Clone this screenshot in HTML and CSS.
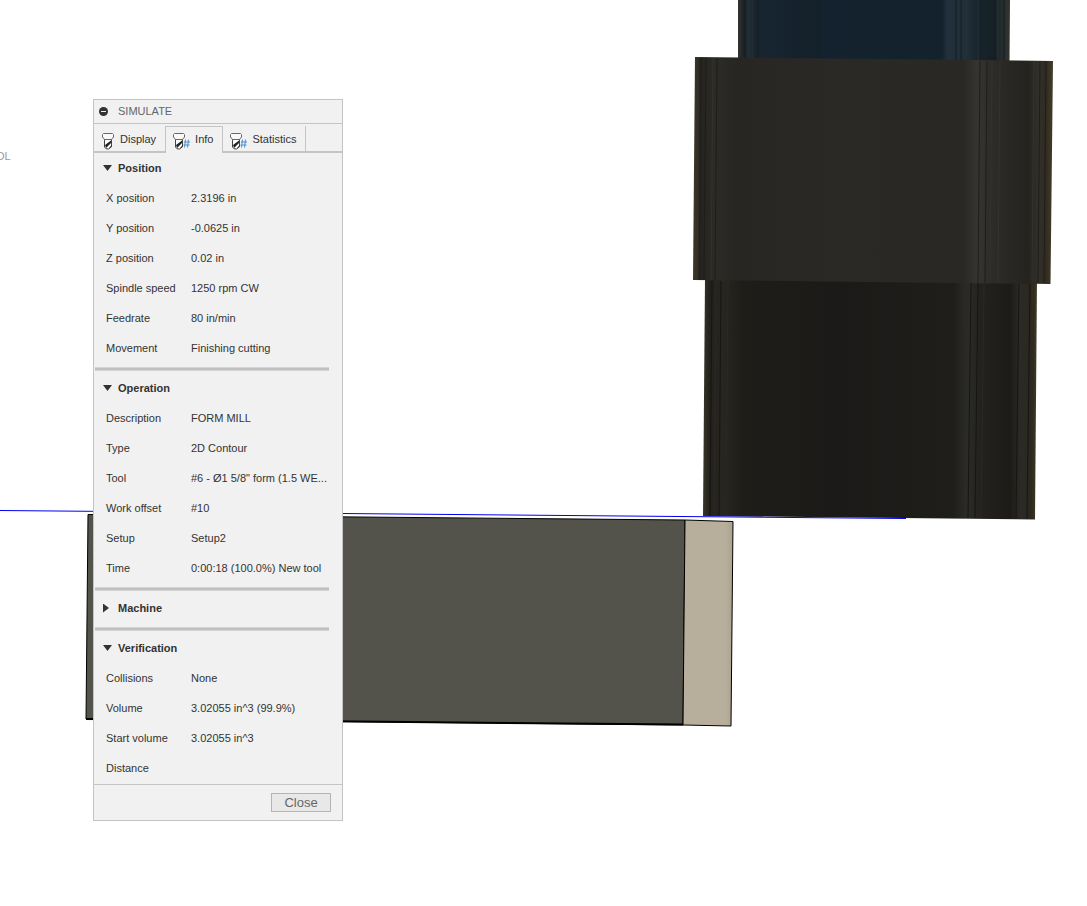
FILE: index.html
```html
<!DOCTYPE html>
<html lang="en">
<head>
    <meta charset="UTF-8">
    <meta name="viewport" content="width=device-width, initial-scale=1.0">
    <title>Simulate</title>
    <link rel="stylesheet" href="styles.css">
</head>
<body>
    <main class="viewport">
        <!-- 3D view: tool holder, stock and toolpath -->
        <svg class="scene" width="1087" height="906" viewBox="0 0 1087 906" aria-hidden="true">
            <defs>
                <linearGradient id="shank">
                    <stop offset="0" stop-color="#33352e"/>
                    <stop offset="0.02" stop-color="#1b2327"/>
                    <stop offset="0.04" stop-color="#222c33"/>
                    <stop offset="0.06" stop-color="#19242c"/>
                    <stop offset="0.1" stop-color="#172530"/>
                    <stop offset="0.3" stop-color="#14202a"/>
                    <stop offset="0.31" stop-color="#13222e"/>
                    <stop offset="0.75" stop-color="#14222d"/>
                    <stop offset="0.77" stop-color="#22303b"/>
                    <stop offset="0.84" stop-color="#202e38"/>
                    <stop offset="0.89" stop-color="#17232b"/>
                    <stop offset="0.94" stop-color="#162026"/>
                    <stop offset="0.97" stop-color="#252c2e"/>
                    <stop offset="1" stop-color="#34342b"/>
                </linearGradient>
                <linearGradient id="collar">
                    <stop offset="0" stop-color="#3d3728"/>
                    <stop offset="0.015" stop-color="#302d24"/>
                    <stop offset="0.02" stop-color="#24231f"/>
                    <stop offset="0.06" stop-color="#2c2b26"/>
                    <stop offset="0.12" stop-color="#272623"/>
                    <stop offset="0.4" stop-color="#2a2926"/>
                    <stop offset="0.75" stop-color="#292824"/>
                    <stop offset="0.79" stop-color="#353432"/>
                    <stop offset="0.83" stop-color="#2d2c28"/>
                    <stop offset="0.93" stop-color="#24231f"/>
                    <stop offset="0.96" stop-color="#32302a"/>
                    <stop offset="0.98" stop-color="#302b21"/>
                    <stop offset="1" stop-color="#453c29"/>
                </linearGradient>
                <linearGradient id="cutter">
                    <stop offset="0" stop-color="#38352a"/>
                    <stop offset="0.02" stop-color="#22211b"/>
                    <stop offset="0.06" stop-color="#272620"/>
                    <stop offset="0.12" stop-color="#1e1d19"/>
                    <stop offset="0.4" stop-color="#1b1a18"/>
                    <stop offset="0.75" stop-color="#1f1e1b"/>
                    <stop offset="0.79" stop-color="#2b2b29"/>
                    <stop offset="0.83" stop-color="#23221e"/>
                    <stop offset="0.92" stop-color="#1c1b17"/>
                    <stop offset="0.95" stop-color="#2c2b28"/>
                    <stop offset="0.98" stop-color="#2b271e"/>
                    <stop offset="1" stop-color="#403824"/>
                </linearGradient>
                <linearGradient id="stock-end">
                    <stop offset="0" stop-color="#b7af9c"/>
                    <stop offset="0.85" stop-color="#b7af9c"/>
                    <stop offset="1" stop-color="#aaa28d"/>
                </linearGradient>
            </defs>

            <text class="axis-label" x="-4" y="160">OL</text>

            <!-- tool -->
            <path fill="url(#cutter)" d="M705 278H1037L1035 519.500L703 516Z"/>
            <path fill="url(#shank)" d="M738 0H1010L1009.500 62H738Z"/>
            <path fill="url(#collar)" d="M695 57L1053 61L1050.500 284L693 280Z"/>
            <g fill="none" stroke-width="1">
                <path stroke="#141c20" d="M745 0V58M758 0V58M956 0V60M961 0V60M995 0V60M1004 0V60"/>
                <path stroke="#25323a" d="M749 0V58M753 0V58M966 0V60M978 0V60M998 0V60"/>
                <path stroke="#1f1e1a" d="M701 58L699 280M706 58L704 280M717 58L715 280M980 61L978 283M987 61L985 283M1040 61L1038 283M1046 61L1044 283"/>
                <path stroke="#34332e" d="M713 58L711 280M975 61L973 283M984 61L982 283M992 61L990 283M1000 61L998 283M1034 61L1032 283"/>
                <path stroke="#171613" d="M712 281L710 516M721 281L719 516M971 283L968 518M978 283L975 518M1019 284L1016 519M1030 284L1027 519"/>
                <path stroke="#2c2a25" d="M716 281L714 516M728 281L726 516M967 283L964 518M984 283L981 518M1023 284L1020 519M1034 284L1031 519"/>
            </g>

            <!-- stock -->
            <path fill="#53524b" stroke="#000" d="M88 514.500L685 520L683 725L86 719Z"/>
            <path fill="url(#stock-end)" stroke="#000" d="M685 520L733 521.500L731 726L683 725Z"/>
            <path stroke="#000" stroke-width="2" d="M86 719L683 724.500"/>
            <path stroke="#0000f0" d="M0 510.500L906 518.500"/>
        </svg>

        <section class="panel" aria-label="Simulate">
            <header class="panel-header">
                <button class="collapse" type="button" aria-label="Collapse">
                    <svg width="9" height="9" viewBox="0 0 9 9"><circle cx="4.500" cy="4.500" r="4.500" fill="#333"/><path d="M2 4.500H7" stroke="#f1f1f1"/></svg>
                </button>
                <h1>SIMULATE</h1>
            </header>

            <div class="tabs" role="tablist">
                <button class="tab" type="button" role="tab" aria-selected="false">
                    <svg width="15" height="18" viewBox="0 0 15 18">
                        <path d="M3.500 6V15Q4.500 17.500 7.500 17L10.500 14.500V6Z" fill="#fff" stroke="#444"/>
                        <path d="M4 13L10 8.500V11L5 16ZM7.500 17L10.500 13V15Z" fill="#222"/>
                        <path d="M2.500 1.500H11.500L12.500 2.500V5L10.500 7.500H3.500L1.500 5V2.500Z" fill="#fafafa" stroke="#666"/>
                    </svg>
                    Display
                </button>
                <button class="tab active" type="button" role="tab" aria-selected="true">
                    <svg width="18" height="18" viewBox="0 0 18 18">
                        <path d="M3.500 6V15Q4.500 17.500 7.500 17L10.500 14.500V6Z" fill="#fff" stroke="#444"/>
                        <path d="M4 13L10 8.500V11L5 16ZM7.500 17L10.500 13V15Z" fill="#222"/>
                        <path d="M2.500 1.500H11.500L12.500 2.500V5L10.500 7.500H3.500L1.500 5V2.500Z" fill="#fafafa" stroke="#666"/>
                        <path d="M13.500 7.500L12.500 15.500M16.500 7.500L15.500 15.500M12 10H18M11.500 13H17.500" fill="none" stroke="#4a90d0"/>
                    </svg>
                    Info
                </button>
                <button class="tab" type="button" role="tab" aria-selected="false">
                    <svg width="18" height="18" viewBox="0 0 18 18">
                        <path d="M3.500 6V15Q4.500 17.500 7.500 17L10.500 14.500V6Z" fill="#fff" stroke="#444"/>
                        <path d="M4 13L10 8.500V11L5 16ZM7.500 17L10.500 13V15Z" fill="#222"/>
                        <path d="M2.500 1.500H11.500L12.500 2.500V5L10.500 7.500H3.500L1.500 5V2.500Z" fill="#fafafa" stroke="#666"/>
                        <path d="M13.500 7.500L12.500 15.500M16.500 7.500L15.500 15.500M12 10H18M11.500 13H17.500" fill="none" stroke="#4a90d0"/>
                    </svg>
                    Statistics
                </button>
            </div>

            <div class="panel-body">
                <details open>
                    <summary>Position</summary>
                    <table>
                        <tr><th scope="row">X position</th><td>2.3196 in</td></tr>
                        <tr><th scope="row">Y position</th><td>-0.0625 in</td></tr>
                        <tr><th scope="row">Z position</th><td>0.02 in</td></tr>
                        <tr><th scope="row">Spindle speed</th><td>1250 rpm CW</td></tr>
                        <tr><th scope="row">Feedrate</th><td>80 in/min</td></tr>
                        <tr><th scope="row">Movement</th><td>Finishing cutting</td></tr>
                    </table>
                </details>
                <hr>
                <details open>
                    <summary>Operation</summary>
                    <table>
                        <tr><th scope="row">Description</th><td>FORM MILL</td></tr>
                        <tr><th scope="row">Type</th><td>2D Contour</td></tr>
                        <tr><th scope="row">Tool</th><td>#6 - Ø1 5/8" form (1.5 WE...</td></tr>
                        <tr><th scope="row">Work offset</th><td>#10</td></tr>
                        <tr><th scope="row">Setup</th><td>Setup2</td></tr>
                        <tr><th scope="row">Time</th><td>0:00:18 (100.0%) New tool</td></tr>
                    </table>
                </details>
                <hr>
                <details>
                    <summary>Machine</summary>
                </details>
                <hr>
                <details open>
                    <summary>Verification</summary>
                    <table>
                        <tr><th scope="row">Collisions</th><td>None</td></tr>
                        <tr><th scope="row">Volume</th><td>3.02055 in^3 (99.9%)</td></tr>
                        <tr><th scope="row">Start volume</th><td>3.02055 in^3</td></tr>
                        <tr><th scope="row">Distance</th><td></td></tr>
                    </table>
                </details>
            </div>

            <footer class="panel-footer">
                <button class="close" type="button">Close</button>
            </footer>
        </section>
    </main>
</body>
</html>
```
FILE: styles.css
```css
* {
    box-sizing: border-box;
}
body {
    margin: 0;
    background-color: #fff;
    font-family: "Liberation Sans", Arial, sans-serif;
    font-size: 11px;
    color: #333;
}
button {
    font-family: inherit;
    color: inherit;
    cursor: pointer;
}
.viewport {
    position: relative;
    min-height: 100vh;
    overflow: hidden;
}
/* the 3D view lies behind the floating panel */
.scene {
    position: absolute;
    top: 0;
    left: 0;
}
.axis-label {
    font-size: 11px;
    fill: #999;
}

/* floating panel */
.panel {
    position: absolute;
    top: 99px;
    left: 93px;
    width: 250px;
    background-color: #f1f1f1;
    border: 1px solid #c4c4c4;
}
.panel-header {
    display: flex;
    align-items: center;
    gap: 10px;
    height: 24px;
    padding: 0 5px 1px;
    border-bottom: 1px solid #c4c4c4;
}
.panel-header h1 {
    margin: 0;
    font-size: 11px;
    font-weight: normal;
    color: #666;
}
.collapse {
    display: flex;
    padding: 0;
    border: none;
    background: none;
}

/* tabs */
.tabs {
    display: flex;
    align-items: flex-end;
    height: 29px;
    padding-top: 2px;
    box-shadow: inset 0 -2px #c4c4c4;
}
.tab {
    display: flex;
    align-items: center;
    gap: 4px;
    height: 25px;
    margin-bottom: 2px;
    padding: 0 9px 0 7px;
    border: none;
    border-right: 1px solid #c4c4c4;
    background: none;
    font-size: 11px;
    line-height: 24px;
}
.tab svg {
    align-self: flex-end;
    margin-bottom: 1px;
}
.tab + .tab {
    gap: 5px;
    padding-left: 6px;
}
.tab:first-child {
    border-right: none;
}
.tab.active {
    height: 27px;
    margin-bottom: 0;
    padding-bottom: 2px;
    border: 1px solid #c4c4c4;
    border-bottom: none;
    background-color: #f1f1f1;
}

/* sections */
.panel-body {
    padding: 0 13px 0 1px;
}
summary {
    display: flex;
    align-items: center;
    gap: 6px;
    height: 30px;
    padding-left: 8px;
    font-weight: bold;
    cursor: pointer;
}
summary::before {
    content: "";
    width: 9px;
    height: 6px;
    background-color: #333;
    clip-path: polygon(0 0, 100% 0, 50% 100%);
}
details:not([open]) summary::before {
    width: 6px;
    height: 9px;
    margin-right: 3px;
    clip-path: polygon(0 0, 100% 50%, 0 100%);
}
table {
    width: 100%;
    border-collapse: collapse;
    table-layout: fixed;
}
th, td {
    height: 30px;
    padding: 0;
    text-align: left;
    font-weight: normal;
    white-space: nowrap;
}
th {
    width: 96px;
    padding-left: 11px;
}
hr {
    height: 4px;
    margin: 4px 0 2px;
    border: none;
    background: linear-gradient(#d4d4d4 1px, #c0c0c0 1px, #c0c0c0 3px, #d4d4d4 3px);
}

.panel-footer {
    display: flex;
    justify-content: flex-end;
    margin-top: 1px;
    padding: 8px 11px;
    border-top: 1px solid #c4c4c4;
}
.close {
    width: 60px;
    height: 19px;
    padding: 0;
    border: 1px solid #b4b4b4;
    background-color: #e8e8e8;
    font-size: 13px;
    line-height: 17px;
    color: #666;
}
```
